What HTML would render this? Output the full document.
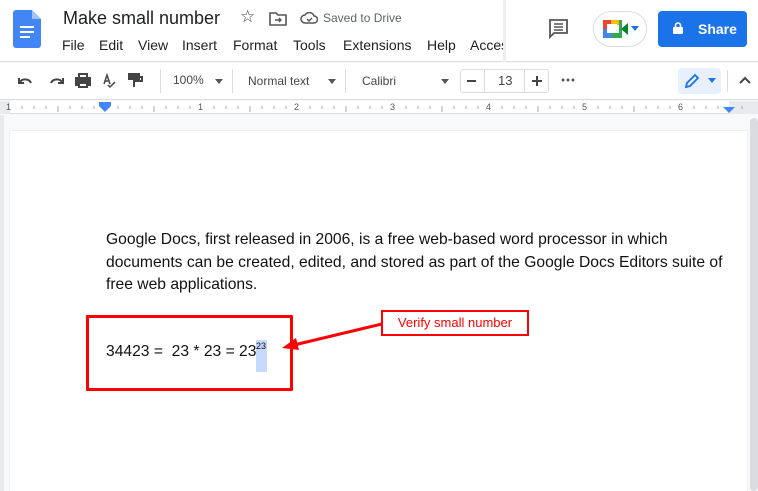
<!DOCTYPE html>
<html><head><meta charset="utf-8"><style>
*{margin:0;padding:0;box-sizing:border-box}
body{width:758px;height:491px;overflow:hidden;background:#f8f9fa;font-family:"Liberation Sans",Arial,sans-serif;position:relative}
.a{position:absolute}
.menu span{position:absolute;top:0;font-size:14px;color:#202124}
.tb{color:#444746;font-size:12px}
.doc{font-family:"Liberation Sans",sans-serif;font-size:15.65px;color:#111;line-height:22.5px;white-space:nowrap}
</style></head><body>
<div class="a" style="left:0;top:0;width:758px;height:62px;background:#fff;border-bottom:1px solid #dadce0"></div>
<div class="a" style="left:503px;top:0;width:3px;height:62px;background:#eee"></div>
<svg class="a" style="left:13px;top:10px" width="28" height="38" viewBox="0 0 28 38"><path d="M3 0h16l9 9v26a3 3 0 0 1-3 3H3a3 3 0 0 1-3-3V3a3 3 0 0 1 3-3z" fill="#4285f4"/><path d="M19 0l9 9h-9z" fill="#a1c2fa"/><rect x="7" y="16" width="14" height="2" fill="#fff"/><rect x="7" y="21" width="14" height="2" fill="#fff"/><rect x="7" y="26" width="10" height="2" fill="#fff"/></svg>
<div class="a" style="left:63px;top:8px;font-size:18px;color:#202124">Make small number</div>
<div class="a" style="left:240px;top:7px;font-size:17px;color:#444">☆</div>
<svg class="a" style="left:269px;top:11px" width="18" height="15"><path d="M1 2h6l2 2h8v10H1z" fill="none" stroke="#555" stroke-width="1.6"/><path d="M6 9h6M10 7l2 2-2 2" stroke="#555" stroke-width="1.4" fill="none"/></svg>
<svg class="a" style="left:300px;top:12px" width="18" height="12"><path d="M5 11a4 4 0 0 1 0-8 5 5 0 0 1 9 1 3.5 3.5 0 0 1 0 7z" fill="none" stroke="#555" stroke-width="1.5"/><path d="M7 7l2 2 3-3" stroke="#555" stroke-width="1.4" fill="none"/></svg>
<div class="a" style="left:323px;top:11px;font-size:12px;color:#5f6368">Saved to Drive</div>
<div class="a menu" style="left:0;top:37px;width:503px;height:20px;overflow:hidden">
<span style="left:62px">File</span><span style="left:99px">Edit</span><span style="left:138px">View</span><span style="left:182px">Insert</span><span style="left:233px">Format</span><span style="left:293px">Tools</span><span style="left:343px">Extensions</span><span style="left:427px">Help</span><span style="left:470px">Acces</span></div>
<svg class="a" style="left:549px;top:19px" width="20" height="20"><path d="M1 1h17v13H5l-4 4z" fill="none" stroke="#555" stroke-width="1.8"/><path d="M5 5h9M5 8h9M5 11h9" stroke="#555" stroke-width="1.5"/></svg>
<div class="a" style="left:593px;top:11px;width:54px;height:36px;border:1px solid #dadce0;border-radius:18px"></div>
<svg class="a" style="left:603px;top:20px" width="26" height="19"><rect x="0" y="0" width="8" height="9" fill="#ea4335"/><rect x="0" y="9" width="8" height="9" fill="#4285f4"/><rect x="8" y="0" width="8" height="5" fill="#fbbc04"/><rect x="8" y="13" width="8" height="5" fill="#34a853"/><rect x="16" y="0" width="3" height="18" fill="#34a853"/><rect x="4" y="4" width="10" height="9" fill="#fff"/><path d="M18 9l7-6v12z" fill="#00832d"/></svg>
<div class="a" style="left:631px;top:26px;border:4px solid transparent;border-top:5px solid #1a73e8"></div>
<div class="a" style="left:658px;top:11px;width:89px;height:36px;background:#1a73e8;border-radius:4px;color:#fff;font-size:14px;font-weight:bold;line-height:36px;padding-left:40px">Share</div>
<svg class="a" style="left:673px;top:22px" width="10" height="12"><rect x="0" y="5" width="10" height="7" rx="1" fill="#fff"/><path d="M2.5 5V3.5a2.5 2.5 0 0 1 5 0V5" stroke="#fff" stroke-width="1.6" fill="none"/></svg>
<div class="a" style="left:0;top:63px;width:758px;height:37px;background:#fff;border-bottom:1px solid #dadce0"></div>
<svg class="a" style="left:16px;top:73px" width="130" height="16" fill="none" stroke="#444" stroke-width="2"><path d="M4 9a6 5 0 0 1 11 1M3 5v5h5"/><path d="M46 9a6 5 0 0 0-11 1M47 5v5h-5"/><rect x="60" y="5" width="14" height="7" fill="#444"/><rect x="63" y="1" width="8" height="4"/><rect x="63" y="10" width="8" height="4" fill="#fff"/><path d="M88 11l3-9 3 9M89 8h4M92 12l2 2 5-5" stroke-width="1.5"/><rect x="113" y="1" width="10" height="5" fill="#444"/><path d="M123 4h3v4h-8v6" /></svg>
<div class="a" style="left:160px;top:69px;width:1px;height:24px;background:#dadce0"></div>
<div class="a tb" style="left:173px;top:73px">100%</div>
<div class="a" style="left:215px;top:79px;border:4px solid transparent;border-top:5px solid #555"></div>
<div class="a" style="left:232px;top:69px;width:1px;height:24px;background:#dadce0"></div>
<div class="a tb" style="left:248px;top:74px">Normal text</div>
<div class="a" style="left:328px;top:79px;border:4px solid transparent;border-top:5px solid #555"></div>
<div class="a" style="left:345px;top:69px;width:1px;height:24px;background:#dadce0"></div>
<div class="a tb" style="left:362px;top:74px">Calibri</div>
<div class="a" style="left:441px;top:79px;border:4px solid transparent;border-top:5px solid #555"></div>
<div class="a" style="left:460px;top:69px;width:89px;height:24px;border:1px solid #dadce0;border-radius:3px"></div>
<div class="a" style="left:484px;top:69px;width:1px;height:24px;background:#dadce0"></div>
<div class="a" style="left:524px;top:69px;width:1px;height:24px;background:#dadce0"></div>
<div class="a" style="left:467px;top:80px;width:9px;height:2px;background:#444"></div>
<div class="a tb" style="left:498px;top:73px;font-size:13px">13</div>
<div class="a" style="left:532px;top:80px;width:10px;height:2px;background:#444"></div>
<div class="a" style="left:536px;top:76px;width:2px;height:10px;background:#444"></div>
<svg class="a" style="left:561px;top:78px" width="16" height="4" fill="#555"><circle cx="2" cy="2" r="1.5"/><circle cx="7" cy="2" r="1.5"/><circle cx="12" cy="2" r="1.5"/></svg>
<div class="a" style="left:678px;top:68px;width:43px;height:26px;background:#e8f0fe;border-radius:4px"></div>
<svg class="a" style="left:684px;top:73px" width="16" height="16"><path d="M2 14l1-4 8-8 3 3-8 8z" fill="none" stroke="#1a73e8" stroke-width="1.8"/></svg>
<div class="a" style="left:708px;top:78px;border:4px solid transparent;border-top:5px solid #1a73e8"></div>
<div class="a" style="left:727px;top:70px;width:1px;height:22px;background:#dadce0"></div>
<svg class="a" style="left:738px;top:75px" width="14" height="10"><path d="M2 8l5-5 5 5" fill="none" stroke="#444" stroke-width="2"/></svg>
<div class="a" style="left:0;top:101px;width:758px;height:13px;background:#fff;border-bottom:1px solid #dadce0"></div>
<div class="a" style="left:0;top:101px;width:10px;height:13px;background:#e8eaed"></div>
<div class="a" style="left:729px;top:101px;width:29px;height:13px;background:#e8eaed"></div>
<div class="a" style="left:6px;top:102px;font-size:9px;color:#555">1</div>
<div class="a" style="left:198px;top:102px;font-size:9px;color:#555">1</div>
<div class="a" style="left:294px;top:102px;font-size:9px;color:#555">2</div>
<div class="a" style="left:390px;top:102px;font-size:9px;color:#555">3</div>
<div class="a" style="left:486px;top:102px;font-size:9px;color:#555">4</div>
<div class="a" style="left:582px;top:102px;font-size:9px;color:#555">5</div>
<div class="a" style="left:678px;top:102px;font-size:9px;color:#555">6</div>
<svg class="a" style="left:0;top:104px" width="758" height="8"><g stroke="#aaa" stroke-width="1">
<path d="M22 2v3M34 2v3M46 2v3M58 2v6M70 2v3M82 2v3M94 2v3M118 2v3M130 2v3M142 2v3M154 2v6M166 2v3M178 2v3M190 2v3M214 2v3M226 2v3M238 2v3M250 2v6M262 2v3M274 2v3M286 2v3M310 2v3M322 2v3M334 2v3M346 2v6M358 2v3M370 2v3M382 2v3M406 2v3M418 2v3M430 2v3M442 2v6M454 2v3M466 2v3M478 2v3M502 2v3M514 2v3M526 2v3M538 2v6M550 2v3M562 2v3M574 2v3M598 2v3M610 2v3M622 2v3M634 2v6M646 2v3M658 2v3M670 2v3M694 2v3M706 2v3M718 2v3M742 2v3"/></g></svg>
<div class="a" style="left:99px;top:102px;width:12px;height:4px;background:#4285f4"></div>
<div class="a" style="left:99px;top:106px;border:6px solid transparent;border-top:6px solid #4285f4"></div>
<div class="a" style="left:723px;top:107px;border:6px solid transparent;border-top:6px solid #4285f4"></div>
<div class="a" style="left:0;top:115px;width:4px;height:376px;background:#e8eaed"></div>
<div class="a" style="left:10px;top:131px;width:737px;height:360px;background:#fff;box-shadow:0 0 1px #ccc"></div>
<div class="a" style="left:750px;top:118px;width:8px;height:373px;background:#dadce0;border-radius:4px"></div>
<div class="a doc" style="left:106px;top:229px">Google Docs, first released in 2006, is a free web-based word processor in which<br>documents can be created, edited, and stored as part of the Google Docs Editors suite of<br>free web applications.</div>
<div class="a" style="left:256px;top:340px;width:11px;height:32px;background:#c6dafc"></div>
<div class="a doc" style="left:106px;top:341px">34423 =&nbsp; 23 * 23 = 23</div>
<div class="a" style="left:256px;top:341px;font-size:9px;color:#111;font-family:'Liberation Sans',sans-serif">23</div>
<div class="a" style="left:86px;top:315px;width:207px;height:76px;border:3px solid #f00;border-radius:1px"></div>
<div class="a" style="left:381px;top:310px;width:148px;height:26px;border:2px solid #f00;background:#fff;color:#f00;font-family:'Liberation Sans',sans-serif;font-size:13px;line-height:22px;text-align:center;white-space:nowrap">Verify small number</div>
<svg class="a" style="left:280px;top:320px" width="105" height="35"><path d="M102 4L14 25" stroke="#f00" stroke-width="3"/><path d="M2 28l14-10 3 12z" fill="#f00"/></svg>
</body></html>
